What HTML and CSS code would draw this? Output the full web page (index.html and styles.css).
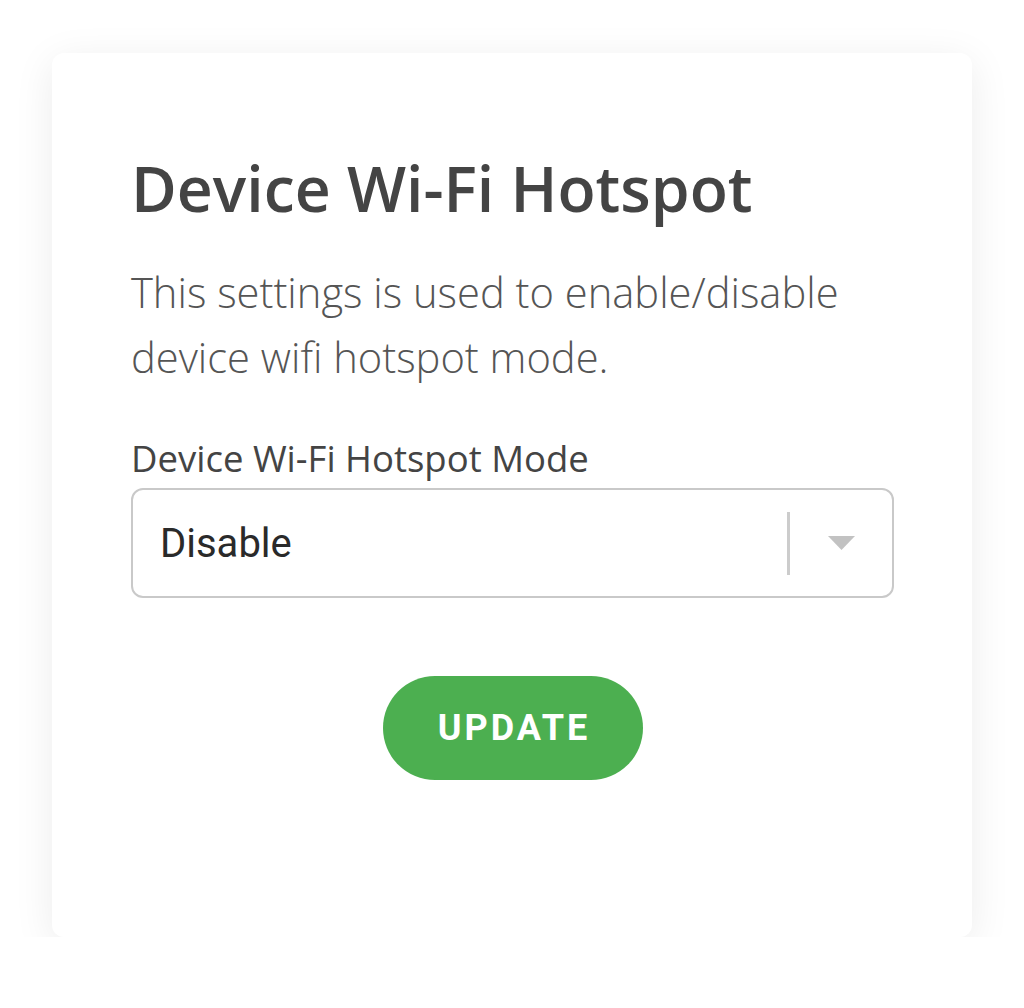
FILE: index.html
```html
<!DOCTYPE html>
<html>
<head>
<meta charset="utf-8">
<link rel="stylesheet" href="styles.css">
</head>
<body>
<div class="card">
  <h1 class="title">Device Wi-Fi Hotspot</h1>
  <p class="desc">This settings is used to enable/disable device wifi hotspot mode.</p>
  <label class="label">Device Wi-Fi Hotspot Mode</label>
  <div class="select">
    <div class="value">Disable</div>
    <div class="indicators">
      <span class="sep"></span>
      <span class="arrow">
        <svg width="27" height="14" viewBox="0 0 27 14"><path d="M0 0 L27 0 L13.5 14 Z" fill="#c2c2c2"/></svg>
      </span>
    </div>
  </div>
  <div class="actions">
    <button class="btn">UPDATE</button>
  </div>
</div>
</body>
</html>
```
FILE: styles.css
```css
html, body {
  margin: 0;
  padding: 0;
  background: #ffffff;
}
body {
  padding: 53px 52px 0 52px;
  font-family: "Open Sans", "Liberation Sans", sans-serif;
}
.card {
  width: 920px;
  box-sizing: border-box;
  height: 884px;
  background: #ffffff;
  border-radius: 12px;
  box-shadow: 0 8px 40px rgba(0, 0, 0, 0.08);
  padding: 97px 78px 0 79px;
  display: flex;
  flex-direction: column;
}
.title {
  margin: 0;
  font-size: 62.5px;
  line-height: 76px;
  font-weight: 600;
  color: #444444;
}
.desc {
  margin: 33px 0 0 0;
  font-size: 41.7px;
  line-height: 65px;
  font-weight: 300;
  color: #555555;
}
.label {
  margin-top: 45px;
  font-size: 36.5px;
  line-height: 48px;
  font-weight: 400;
  color: #444444;
}
.select {
  margin-top: 6px;
  height: 110px;
  box-sizing: border-box;
  border: 2px solid #c9c9c9;
  border-radius: 12px;
  display: flex;
  align-items: center;
}
.value {
  flex: 1;
  padding-left: 27px;
  font-family: Roboto, "Liberation Sans", sans-serif;
  font-size: 40px;
  color: #2a2a2a;
}
.indicators {
  display: flex;
  align-items: center;
  align-self: stretch;
}
.sep {
  width: 3px;
  height: 63px;
  background: #cccccc;
}
.arrow {
  width: 102px;
  display: flex;
  justify-content: center;
  align-items: center;
}
.arrow svg {
  display: block;
}
.actions {
  margin-top: 78px;
  display: flex;
  justify-content: center;
}
.btn {
  width: 260px;
  height: 104px;
  border: none;
  border-radius: 52px;
  background: #4caf50;
  color: #ffffff;
  font-family: Roboto, "Liberation Sans", sans-serif;
  font-weight: 700;
  font-size: 36px;
  letter-spacing: 3px;
  padding: 0 0 0 3px;
}
```
